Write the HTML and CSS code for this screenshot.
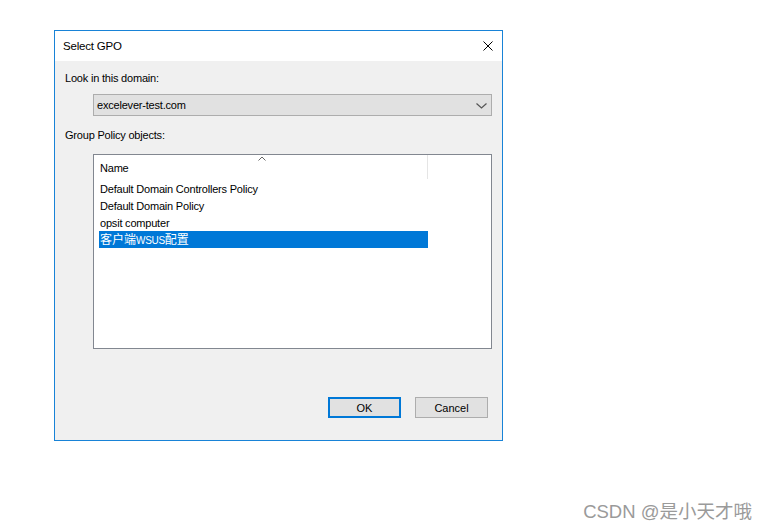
FILE: index.html
```html
<!DOCTYPE html>
<html lang="en">
<head>
	<meta charset="UTF-8">
	<title>Select GPO</title>
	<link rel="stylesheet" href="styles.css">
</head>
<body>

<div class="dialog">
	<div class="title-bar">
		<span class="title-text">Select GPO</span>
		<svg class="close-icon" width="10" height="10" viewBox="0 0 10 10">
			<path d="M0.5 0.5 L9.5 9.5 M9.5 0.5 L0.5 9.5" stroke="#000" stroke-width="1" fill="none"/>
		</svg>
	</div>

	<div class="dialog-body">
		<div class="label label-domain">Look in this domain:</div>
		<div class="combo">
			<span class="combo-text">excelever-test.com</span>
			<svg class="combo-arrow" width="11" height="6" viewBox="0 0 11 6">
				<path d="M0.5 0.5 L5.5 5 L10.5 0.5" stroke="#555" stroke-width="1.2" fill="none"/>
			</svg>
		</div>

		<div class="label label-gpo">Group Policy objects:</div>
		<div class="list-box">
			<div class="list-header">
				<div class="col-name">
					<svg class="sort-arrow" width="8" height="5" viewBox="0 0 8 5">
						<path d="M0.5 4.5 L4 1 L7.5 4.5" stroke="#666" stroke-width="1" fill="none"/>
					</svg>
					Name
				</div>
			</div>
			<div class="list-items">
				<div class="list-item">Default Domain Controllers Policy</div>
				<div class="list-item">Default Domain Policy</div>
				<div class="list-item">opsit computer</div>
				<div class="list-item selected">客户端<span class="latin">WSUS</span>配置</div>
			</div>
		</div>

		<div class="button-row">
			<button class="dlg-btn default">OK</button>
			<button class="dlg-btn">Cancel</button>
		</div>
	</div>
</div>

<div class="watermark">CSDN @是小天才哦</div>

</body>
</html>
```

FILE: styles.css
```css
body {
	margin: 0;
	padding: 0;
	background-color: white;
	font-family: "Liberation Sans", Arial, "Noto Sans CJK SC", sans-serif;
	font-size: 11px;
	letter-spacing: -0.2px;
	color: black;
}

.dialog {
	box-sizing: border-box;
	width: 449px;
	height: 411px;
	margin-left: 54px;
	margin-top: 30px;
	border: 1px solid #1883d7;
	background-color: #f0f0f0;
	display: flex;
	flex-direction: column;
}

.title-bar {
	height: 30px;
	background-color: white;
	display: flex;
	align-items: center;
	justify-content: space-between;
	padding: 0 9px 0 8px;
}

.title-text {
	font-size: 11.5px;
}

.close-icon {
	display: block;
}

.dialog-body {
	flex: 1;
	display: flex;
	flex-direction: column;
	padding: 0 10px 0 10px;
}

.label {
	height: 14px;
	line-height: 14px;
}

.label-domain {
	margin-top: 10px;
}

.label-gpo {
	margin-top: 12px;
}

.combo {
	box-sizing: border-box;
	height: 22px;
	margin-top: 9px;
	margin-left: 28px;
	background-color: #e1e1e1;
	border: 1px solid #adadad;
	display: flex;
	align-items: center;
	justify-content: space-between;
	padding: 0 4px 0 3px;
}

.combo-arrow {
	display: block;
	margin-top: 1px;
}

.list-box {
	box-sizing: border-box;
	height: 195px;
	margin-top: 12px;
	margin-left: 28px;
	background-color: white;
	border: 1px solid #828790;
}

.list-header {
	height: 25px;
	display: flex;
}

.col-name {
	position: relative;
	box-sizing: border-box;
	width: 334px;
	height: 24px;
	border-right: 1px solid #e5e5e5;
	padding-left: 6px;
	padding-top: 6px;
	line-height: 14px;
}

.sort-arrow {
	position: absolute;
	top: 1px;
	left: 164px;
}

.list-items {
	padding-left: 5px;
}

.list-item {
	width: 329px;
	height: 17px;
	line-height: 16px;
	padding-top: 1px;
	padding-left: 1px;
	box-sizing: border-box;
}

.list-item.selected {
	background-color: #0078d7;
	color: white;
	font-size: 12px;
	letter-spacing: 0;
}

.list-item .latin {
	font-size: 10px;
	letter-spacing: -0.3px;
}

.button-row {
	display: flex;
	justify-content: flex-end;
	gap: 14px;
	margin-top: 48px;
	padding-right: 4px;
}

.dlg-btn {
	box-sizing: border-box;
	width: 73px;
	height: 21px;
	background-color: #e1e1e1;
	border: 1px solid #adadad;
	font-family: "Liberation Sans", Arial, sans-serif;
	font-size: 11px;
	color: black;
	padding: 0;
}

.dlg-btn.default {
	border: 2px solid #0078d7;
}

.watermark {
	position: absolute;
	top: 497px;
	right: 17px;
	font-family: "Liberation Sans", Arial, "Noto Sans CJK SC", sans-serif;
	font-size: 18.5px;
	letter-spacing: 0;
	color: #9a9a9a;
}
```
